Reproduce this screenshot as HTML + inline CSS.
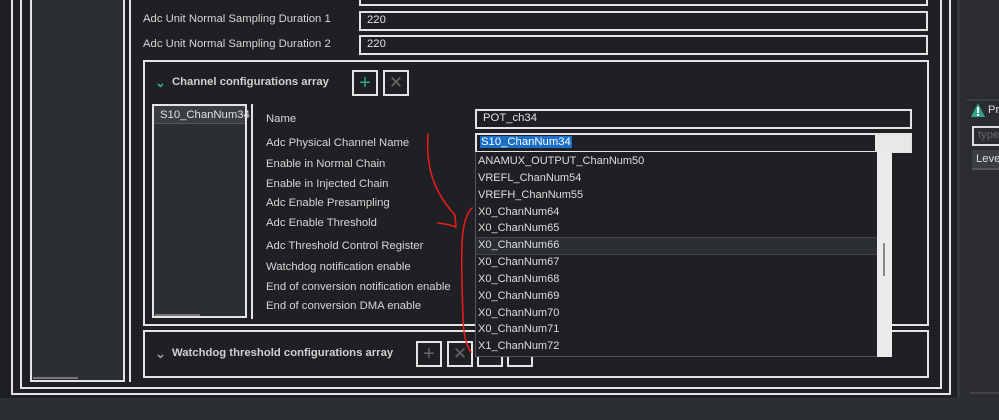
<!DOCTYPE html>
<html><head><style>
*{margin:0;padding:0;box-sizing:border-box}
body{width:999px;height:420px;overflow:hidden;background:#1e2023;font-family:"Liberation Sans",sans-serif;font-size:11.3px;color:#d6d6d6;position:relative}
.a{position:absolute}
.b{position:absolute;border:2px solid #e4e4e4}
.in{position:absolute;border:2px solid #e4e4e4;background:#1e2023;padding-left:6px;line-height:15px;color:#e0e0e0}
.lbl{position:absolute;white-space:nowrap}
.it{position:absolute;left:478px;white-space:nowrap;height:17px;line-height:17px;color:#dedede;font-size:11px}
.btn{position:absolute;width:26px;height:26px;border:2px solid #e4e4e4;background:#1e2023;text-align:center;line-height:22px;font-size:20px;color:#666}
</style></head><body>
<div class="a" style="left:0;top:398px;width:999px;height:22px;background:#2b2e33"></div>
<div class="a" style="left:960px;top:0;width:39px;height:398px;background:#2a2c30"></div>
<div class="a" style="left:957px;top:0;width:3px;height:398px;background:#34373c"></div>
<div class="b" style="left:11px;top:-10px;width:940px;height:405px;border-width:2px"></div>
<div class="b" style="left:20px;top:-10px;width:922px;height:399px"></div>
<div class="b" style="left:30px;top:-10px;width:95px;height:392px;background:#2b2e33"></div>
<div class="a" style="left:33px;top:377px;width:45px;height:2px;background:#777"></div>
<div class="a" style="left:129px;top:0;width:2px;height:382px;background:#e4e4e4"></div>

<div class="in" style="left:359px;top:-12px;width:569px;height:18px"></div>
<div class="lbl" style="left:143px;top:13px">Adc Unit Normal Sampling Duration 1</div>
<div class="in" style="left:359px;top:11px;width:569px;height:20px">220</div>
<div class="lbl" style="left:143px;top:38px">Adc Unit Normal Sampling Duration 2</div>
<div class="in" style="left:359px;top:35px;width:569px;height:20px">220</div>

<div class="b" style="left:143px;top:60px;width:786px;height:266px"></div>
<div class="lbl" style="left:155px;top:75px;color:#3aa58a;font-size:13px;font-weight:bold">⌄</div>
<div class="lbl" style="left:172px;top:76px;font-weight:bold;color:#d0d0d0">Channel configurations array</div>
<div class="btn" style="left:352px;top:70px;color:#3aa58a">+</div>
<div class="btn" style="left:383px;top:70px;font-size:17px">✕</div>

<div class="b" style="left:152px;top:104px;width:95px;height:214px;background:#2b2e33"></div>
<div class="a" style="left:154px;top:106px;width:91px;height:18px;background:#3a3d42;border-bottom:1px solid #555"></div>
<div class="lbl" style="left:160px;top:109px;color:#e0e0e0">S10_ChanNum34</div>
<div class="a" style="left:155px;top:314px;width:45px;height:2px;background:#777"></div>
<div class="a" style="left:251px;top:104px;width:2px;height:215px;background:#e4e4e4"></div>

<div class="lbl" style="left:266px;top:113px">Name</div>
<div class="lbl" style="left:266px;top:137px">Adc Physical Channel Name</div>
<div class="lbl" style="left:266px;top:158px">Enable in Normal Chain</div>
<div class="lbl" style="left:266px;top:178px">Enable in Injected Chain</div>
<div class="lbl" style="left:266px;top:197px">Adc Enable Presampling</div>
<div class="lbl" style="left:266px;top:217px">Adc Enable Threshold</div>
<div class="lbl" style="left:266px;top:240px">Adc Threshold Control Register</div>
<div class="lbl" style="left:266px;top:261px">Watchdog notification enable</div>
<div class="lbl" style="left:266px;top:281px">End of conversion notification enable</div>
<div class="lbl" style="left:266px;top:300px">End of conversion DMA enable</div>

<div class="in" style="left:475px;top:109px;width:437px;height:20px">POT_ch34</div>
<div class="in" style="left:475px;top:133px;width:437px;height:20px;padding-left:3px"><span style="background:#1a6fc9;color:#fff;padding:0 1px">S10_ChanNum34</span></div>
<div class="a" style="left:875px;top:135px;width:35px;height:17px;background:#e8e8e8"></div>

<div class="b" style="left:143px;top:330px;width:786px;height:48px"></div>
<div class="lbl" style="left:155px;top:346px;color:#999;font-size:13px;font-weight:bold">⌄</div>
<div class="lbl" style="left:172px;top:347px;font-weight:bold;color:#d0d0d0">Watchdog threshold configurations array</div>
<div class="btn" style="left:416px;top:341px">+</div>
<div class="btn" style="left:447px;top:341px;font-size:17px">✕</div>
<div class="btn" style="left:477px;top:341px"></div>
<div class="btn" style="left:507px;top:341px"></div>

<div class="a" style="left:475px;top:152px;width:403px;height:205px;background:#1e2023;border-left:1px solid #555;border-bottom:1px solid #555"></div>
<div class="a" style="left:476px;top:237px;width:401px;height:18px;background:#2b2e33;border-top:1px solid #444;border-bottom:1px solid #444"></div>
<div class="a" style="left:877px;top:152px;width:15px;height:205px;background:#ebebeb"></div>
<div class="a" style="left:883px;top:243px;width:2px;height:33px;background:#888"></div>
<div class="it" style="top:153px">ANAMUX_OUTPUT_ChanNum50</div>
<div class="it" style="top:170px">VREFL_ChanNum54</div>
<div class="it" style="top:187px">VREFH_ChanNum55</div>
<div class="it" style="top:204px">X0_ChanNum64</div>
<div class="it" style="top:220px">X0_ChanNum65</div>
<div class="it" style="top:237px">X0_ChanNum66</div>
<div class="it" style="top:254px">X0_ChanNum67</div>
<div class="it" style="top:271px">X0_ChanNum68</div>
<div class="it" style="top:288px">X0_ChanNum69</div>
<div class="it" style="top:305px">X0_ChanNum70</div>
<div class="it" style="top:321px">X0_ChanNum71</div>
<div class="it" style="top:338px">X1_ChanNum72</div>

<div class="a" style="left:967px;top:99px;width:32px;height:2px;background:#3a3d42"></div>
<svg class="a" style="left:970px;top:102px" width="16" height="16"><path d="M8 1L15 15H1Z" fill="#2fa58a"/><rect x="7" y="5" width="2" height="6" fill="#fff"/><rect x="7" y="12" width="2" height="2" fill="#fff"/></svg>
<div class="lbl" style="left:988px;top:104px;color:#ddd">Pr</div>
<div class="a" style="left:972px;top:126px;width:30px;height:20px;border:2px solid #ddd;color:#666;padding-left:4px;line-height:15px">type</div>
<div class="a" style="left:972px;top:150px;width:30px;height:20px;background:#3a3d42;border-bottom:2px solid #555;padding-left:4px;line-height:18px;color:#ddd">Leve</div>
<div class="a" style="left:970px;top:392px;width:29px;height:2px;background:#444"></div>

<svg class="a" style="left:0;top:0" width="999" height="420"><g fill="none" stroke="#f01c1c" stroke-width="1.5" stroke-linecap="round"><path d="M428 134C426 165 432 190 455 215L456 227"/><path d="M438 223C446 224 451 225 456 227"/><path d="M472 208C462 218 461 240 462 280C463 320 462 340 471 352"/></g></svg>
</body></html>
